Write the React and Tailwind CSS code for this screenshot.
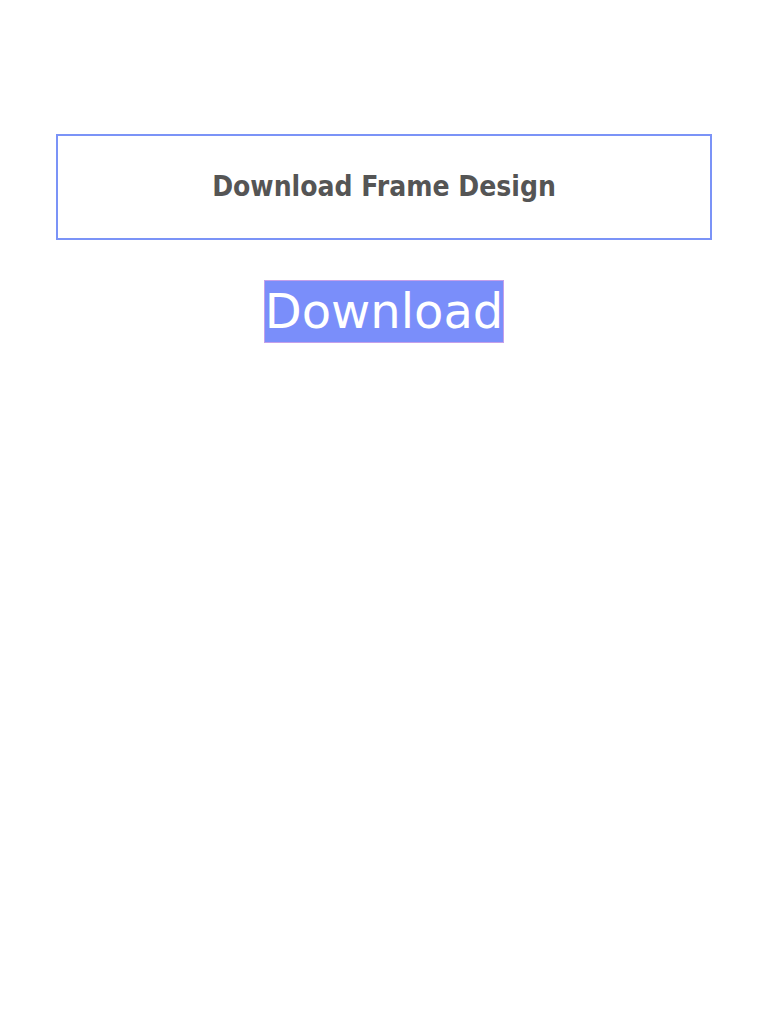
export default function App() {
  return (
    <div className="min-h-screen bg-white pt-[134px] px-[56px] font-['DejaVu_Sans',sans-serif]">
      {/* Title frame */}
      <div className="h-[106px] border-2 border-[#7b93f7] flex items-center justify-center">
        <h1 className="text-[28px] font-bold text-[#555555] font-['DejaVu_Sans_Condensed','DejaVu_Sans',sans-serif]">
          Download Frame Design
        </h1>
      </div>

      <div className="flex justify-center mt-[40px]">
        <a href="#" className="block bg-[#7a8efa] border border-[#c4a0ea] text-white text-[48px] leading-[61px]">
          Download
        </a>
      </div>
    </div>
  )
}
